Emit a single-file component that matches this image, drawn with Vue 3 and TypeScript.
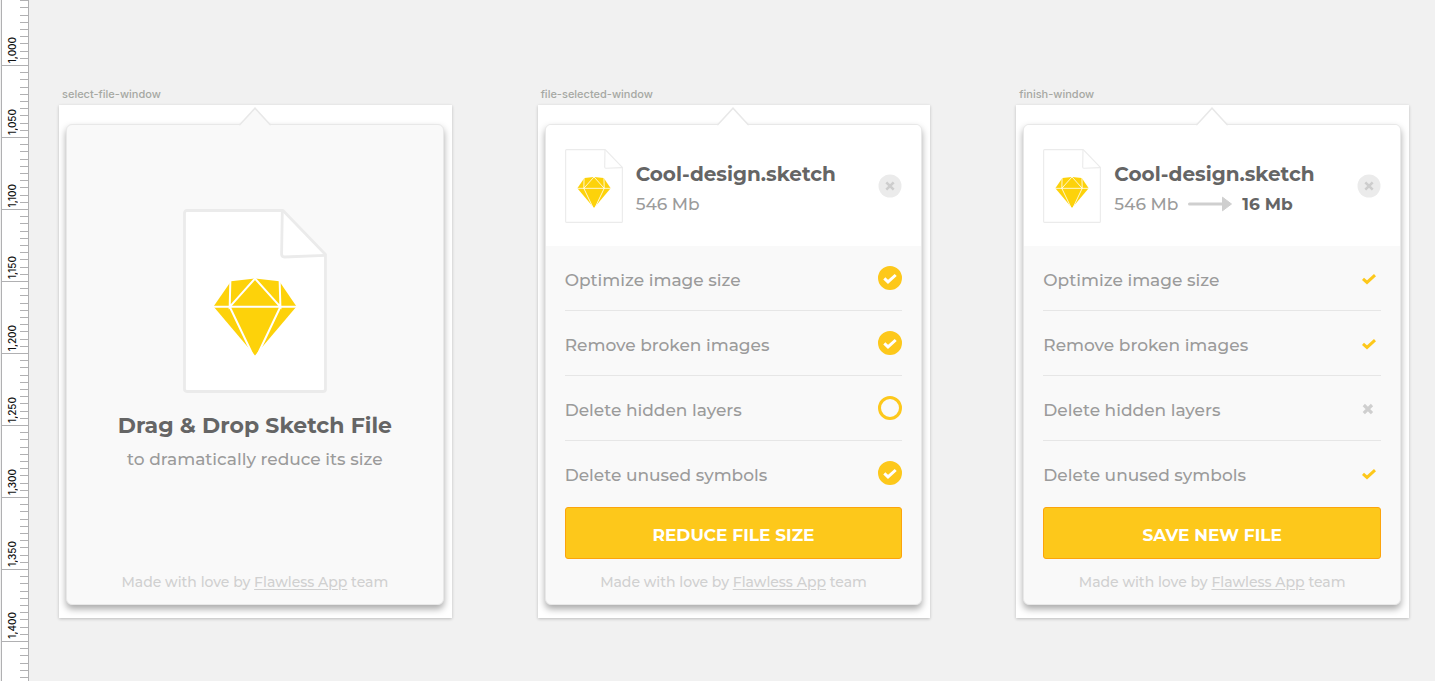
<script setup lang="ts">
import { computed, defineComponent, h, reactive } from 'vue'

interface Task {
  id: string
  label: string
  enabled: boolean
}

interface FileWindow {
  id: string
  action: string
  finished: boolean
}

const marks: string[] = ['1,000', '1,050', '1,100', '1,150', '1,200', '1,250', '1,300', '1,350', '1,400', '']

const tasks = reactive<Task[]>([
  { id: 'optimize', label: 'Optimize image size', enabled: true },
  { id: 'broken', label: 'Remove broken images', enabled: true },
  { id: 'hidden', label: 'Delete hidden layers', enabled: false },
  { id: 'unused', label: 'Delete unused symbols', enabled: true },
])

const results = computed(() => tasks.map((t) => ({ ...t })))

const windows: FileWindow[] = [
  { id: 'file-selected-window', action: 'REDUCE FILE SIZE', finished: false },
  { id: 'finish-window', action: 'SAVE NEW FILE', finished: true },
]

const SketchFile = defineComponent({
  setup: () => () =>
    h('svg', { viewBox: '0 0 144 184', 'aria-hidden': 'true' }, [
      h('path', {
        d: 'M4 1.5H100L142.5 45.5V180Q142.5 182.5 140 182.5H4Q1.5 182.5 1.5 180V4Q1.5 1.5 4 1.5Z',
        fill: '#fff',
        stroke: '#ebebeb',
        'stroke-width': 2.8,
        'stroke-linejoin': 'round',
      }),
      h('path', {
        d: 'M99.3 2L98.6 45Q98.6 48 101.5 48L142 46.3',
        fill: 'none',
        stroke: '#ebebeb',
        'stroke-width': 2.8,
      }),
      h('path', { d: 'M30.5 97.5L48 72.2L72 69.5L96.3 72.2L113.5 97.5L72 146.5Z', fill: '#fdd20a' }),
      h('path', {
        d: 'M30 97.8H114M47.4 70L46.7 97.8L72 69.5L97.4 97.8L96.6 70M46.7 97.8L70 146.5M97.4 97.8L74.2 146.5',
        fill: 'none',
        stroke: '#fff',
        'stroke-width': 2,
      }),
    ]),
})

const PopoverTip = defineComponent({
  props: { fill: { type: String, required: true } },
  setup: (props) => () =>
    h('svg', { viewBox: '0 0 32 19', 'aria-hidden': 'true' }, [
      h('path', { d: 'M0 19V17.5H1L16 1.2L31 17.5H32V19Z', fill: props.fill }),
      h('path', { d: 'M0 17.5H1L16 1.2L31 17.5H32', fill: 'none', stroke: '#e8e8e8', 'stroke-width': 1.5 }),
    ]),
})
</script>

<template>
  <div class="workspace">
    <aside class="ruler" aria-label="Vertical ruler">
      <div v-for="mark in marks" :key="mark" class="segment">
        <span class="mark">{{ mark }}</span>
        <div class="ticks"><i v-for="n in 10" :key="n" class="tick"></i></div>
      </div>
    </aside>

    <main class="canvas">
      <section class="artboard">
        <h2 class="name">select-file-window</h2>
        <div class="board">
          <div class="card">
            <PopoverTip class="tip" fill="#f9f9f9" />
            <div class="drop">
              <SketchFile class="file-large" />
              <h3 class="drop-title">Drag &amp; Drop Sketch File</h3>
              <p class="drop-text">to dramatically reduce its size</p>
            </div>
            <p class="credit">Made with love by <a href="#">Flawless App</a> team</p>
          </div>
        </div>
      </section>

      <section v-for="win in windows" :key="win.id" class="artboard">
        <h2 class="name">{{ win.id }}</h2>
        <div class="board">
          <div class="card">
            <PopoverTip class="tip" fill="#ffffff" />
            <header class="head">
              <SketchFile class="file-small" />
              <div class="info">
                <h3 class="file-name">Cool-design.sketch</h3>
                <p class="sizes">
                  <span>546 Mb</span>
                  <template v-if="win.finished">
                    <svg class="arrow" viewBox="0 0 44 16" aria-hidden="true">
                      <path d="M1.5 8H36" stroke="#cfcfcf" stroke-width="3" stroke-linecap="round" />
                      <path d="M34.5 1.2L43.5 8L34.5 14.8Z" fill="#cfcfcf" stroke="#cfcfcf" stroke-linejoin="round" />
                    </svg>
                    <strong>16 Mb</strong>
                  </template>
                </p>
              </div>
              <button class="close" type="button" aria-label="Remove file">
                <svg viewBox="0 0 24 24" aria-hidden="true">
                  <circle cx="12" cy="12" r="11.5" fill="#ebebeb" />
                  <path d="M8.3 8.3L15.7 15.7M15.7 8.3L8.3 15.7" stroke="#cdcdcd" stroke-width="2.6" />
                </svg>
              </button>
            </header>

            <ul v-if="!win.finished" class="tasks">
              <li v-for="task in tasks" :key="task.id">
                <label class="task" :for="task.id">
                  <span class="task-label">{{ task.label }}</span>
                  <span class="toggle">
                    <input :id="task.id" v-model="task.enabled" type="checkbox" />
                    <svg v-if="task.enabled" viewBox="0 0 24 24" aria-hidden="true">
                      <path d="M6.3 12.4L10 15.9L17.7 9" fill="none" stroke="#fff" stroke-width="3" />
                    </svg>
                  </span>
                </label>
              </li>
            </ul>
            <ul v-else class="tasks">
              <li v-for="task in results" :key="task.id">
                <div class="task">
                  <span class="task-label">{{ task.label }}</span>
                  <svg class="result" viewBox="0 0 24 24" aria-hidden="true">
                    <path v-if="task.enabled" d="M6 12.8L10 16.4L18 9.2" fill="none" stroke="#fdc81b" stroke-width="3" />
                    <path v-else d="M6.8 9L15 17.2M15 9L6.8 17.2" stroke="#cfcfcf" stroke-width="3.2" />
                  </svg>
                </div>
              </li>
            </ul>

            <button class="action" type="button">{{ win.action }}</button>
            <p class="credit">Made with love by <a href="#">Flawless App</a> team</p>
          </div>
        </div>
      </section>
    </main>
  </div>
</template>

<style>
body {
  margin: 0;
  background: #f1f1f1;
}
</style>

<style scoped>
.workspace {
  display: flex;
  height: 100vh;
  overflow: hidden;
  background: #f1f1f1;
  font-family: Montserrat, Inter, sans-serif;
  color: #9b9b9b;
}

h2,
h3,
p,
ul {
  margin: 0;
  padding: 0;
}

.ruler {
  flex: none;
  box-sizing: border-box;
  width: 28px;
  margin-top: -6px;
  margin-left: 1px;
  border-left: 1px solid #b0b0b2;
  border-right: 1px solid #b0b0b2;
  background: #fff;
}

.segment {
  box-sizing: border-box;
  display: flex;
  justify-content: space-between;
  align-items: flex-end;
  height: 72px;
  border-bottom: 1px solid #b0b0b2;
}

.mark {
  margin: 0 0 2px 3px;
  writing-mode: vertical-rl;
  transform: rotate(180deg);
  font: 500 10px/14px Inter, sans-serif;
  color: #111;
}

.ticks {
  display: flex;
  flex-direction: column;
  width: 8px;
  height: 100%;
  margin-left: auto;
}

.tick {
  flex: 1;
  border-bottom: 1px solid #b0b0b2;
}

.tick:last-child {
  border-bottom: 0;
}

.canvas {
  flex: 1;
  display: grid;
  grid-template-columns: repeat(3, 1fr);
  align-items: start;
  gap: 86px;
  padding: 86px 26px 0 30px;
}

.name {
  padding: 0 3px 3px;
  font: 500 11px/16px Inter, sans-serif;
  color: #a6a8a3;
}

.board {
  padding: 19px 8px 13px 7px;
  background: #fff;
  box-shadow: 0 1px 3px rgba(0, 0, 0, 0.22);
}

.card {
  position: relative;
  box-sizing: border-box;
  display: flex;
  flex-direction: column;
  min-height: 481px;
  border: 1px solid #e8e8e8;
  border-radius: 6px;
  background: #f9f9f9;
  box-shadow: 0 4px 7px rgba(0, 0, 0, 0.34);
}

.tip {
  position: absolute;
  top: -18px;
  left: 50%;
  width: 32px;
  height: 19px;
  margin-left: -16px;
}

.drop {
  display: flex;
  flex-direction: column;
  align-items: center;
  padding-top: 84px;
}

.file-large {
  width: 144px;
  height: 184px;
}

.drop-title {
  margin-top: 18px;
  font-size: 22px;
  font-weight: 700;
  line-height: 30px;
  color: #656565;
}

.drop-text {
  margin-top: 6px;
  font-size: 17px;
  font-weight: 500;
  line-height: 24px;
}

.credit {
  margin-top: auto;
  padding-bottom: 12px;
  font-size: 14px;
  font-weight: 500;
  line-height: 20px;
  text-align: center;
  color: #d0d0d0;
}

.credit a {
  color: inherit;
  text-underline-offset: 2px;
}

.head {
  display: flex;
  align-items: center;
  height: 121px;
  padding: 0 19px;
  border-radius: 5px 5px 0 0;
  background: #fff;
}

.file-small {
  flex: none;
  width: 58px;
  height: 74px;
}

.info {
  flex: 1;
  margin-left: 13px;
  padding-top: 4px;
  white-space: nowrap;
}

.file-name {
  font-size: 20px;
  font-weight: 700;
  line-height: 28px;
  color: #656565;
}

.sizes {
  display: flex;
  align-items: center;
  gap: 10px;
  margin-top: 4px;
  font-size: 17px;
  font-weight: 500;
  line-height: 24px;
}

.sizes strong {
  font-weight: 700;
  color: #656565;
}

.arrow {
  width: 44px;
  height: 16px;
}

.close {
  width: 24px;
  height: 24px;
  padding: 0;
  border: 0;
  background: none;
}

.close svg {
  display: block;
}

.tasks {
  margin: 0 19px;
  list-style: none;
}

.tasks li {
  border-bottom: 1px solid #e6e6e6;
}

.tasks li:last-child {
  border-bottom: 0;
}

.task {
  display: flex;
  align-items: center;
  justify-content: space-between;
  height: 64px;
}

.task-label {
  padding-top: 4px;
  font-size: 17px;
  font-weight: 500;
  line-height: 24px;
}

.toggle {
  display: grid;
  width: 24px;
  height: 24px;
}

.toggle > * {
  grid-area: 1 / 1;
}

.toggle input {
  appearance: none;
  box-sizing: border-box;
  width: 24px;
  height: 24px;
  margin: 0;
  border: 3px solid #fdc81b;
  border-radius: 50%;
}

.toggle input:checked {
  background: #fdc81b;
}

.toggle svg {
  pointer-events: none;
  z-index: 1;
}

.result {
  width: 24px;
  height: 24px;
}

.action {
  height: 52px;
  margin: 2px 19px 0;
  padding: 3px 0 0;
  border: 1px solid #fca40c;
  border-radius: 3px;
  background: #fdc81b;
  font: 700 17px/24px Montserrat, Inter, sans-serif;
  color: #fff;
}
</style>
